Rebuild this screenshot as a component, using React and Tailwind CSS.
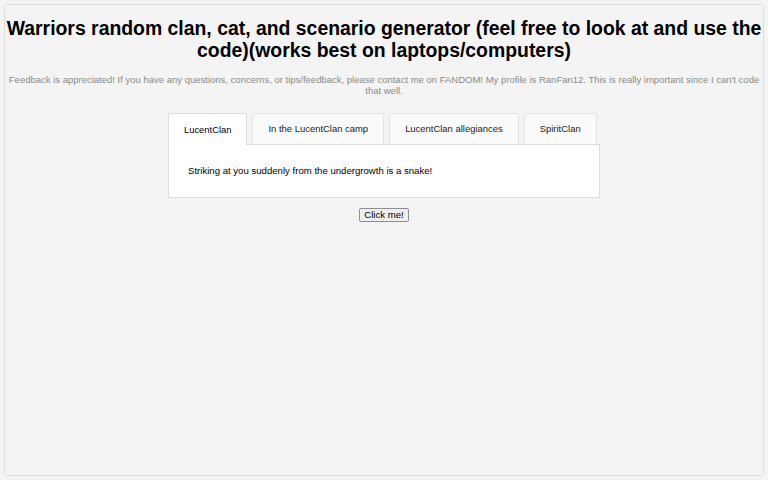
export default function App() {
  const tabs = ["LucentClan", "In the LucentClan camp", "LucentClan allegiances", "SpiritClan"];
  return (
    <div className="w-[768px] h-[480px] bg-[#f4f4f4] p-1 font-['Liberation_Sans',Arial,sans-serif]">
      <div className="h-[472px] w-[760px] border border-[#dcdcdc] rounded-[3px] bg-[#f4f4f4] flex flex-col items-center">
        <h1 className="mt-[12px] text-[19.4px] leading-[22px] font-bold text-black text-center px-[1px]">
          Warriors random clan, cat, and scenario generator (feel free to look at and use the code)(works best on laptops/computers)
        </h1>
        <p className="mt-[13px] text-[9.5px] leading-[11px] text-[#8a8a8a] text-center px-[2px]">
          Feedback is appreciated! If you have any questions, concerns, or tips/feedback, please contact me on FANDOM! My profile is RanFan12. This is really important since I can't code that well.
        </p>
        <div className="mt-[17px] w-[432px] flex flex-col">
          <div className="flex gap-[5px] relative z-10">
            {tabs.map((t, i) => (
              <div
                key={t}
                className={
                  i === 0
                    ? "whitespace-nowrap px-[15px] h-[32px] leading-[31px] text-[9.4px] text-black bg-white border border-[#dcdcdc] border-b-0 rounded-t-[2px]"
                    : "whitespace-nowrap px-[15px] h-[31px] leading-[30px] text-[9.45px] text-[#222] bg-[#fafafa] border border-[#e2e2e2] border-b-0 rounded-t-[2px]"
                }
              >
                {t}
              </div>
            ))}
          </div>
          <div className="-mt-[1px] bg-white border border-[#dcdcdc] px-[19px] pt-[20px] pb-[20px] text-[9.6px] leading-[12px] text-black">
            Striking at you suddenly from the undergrowth is a snake!
          </div>
        </div>
        <button className="mt-[10px] px-[4px] h-[14px] text-[9.6px] leading-[12px] text-black bg-[#efefef] border border-[#8f8f8f] rounded-[2px]">
          Click me!
        </button>
      </div>
    </div>
  );
}
